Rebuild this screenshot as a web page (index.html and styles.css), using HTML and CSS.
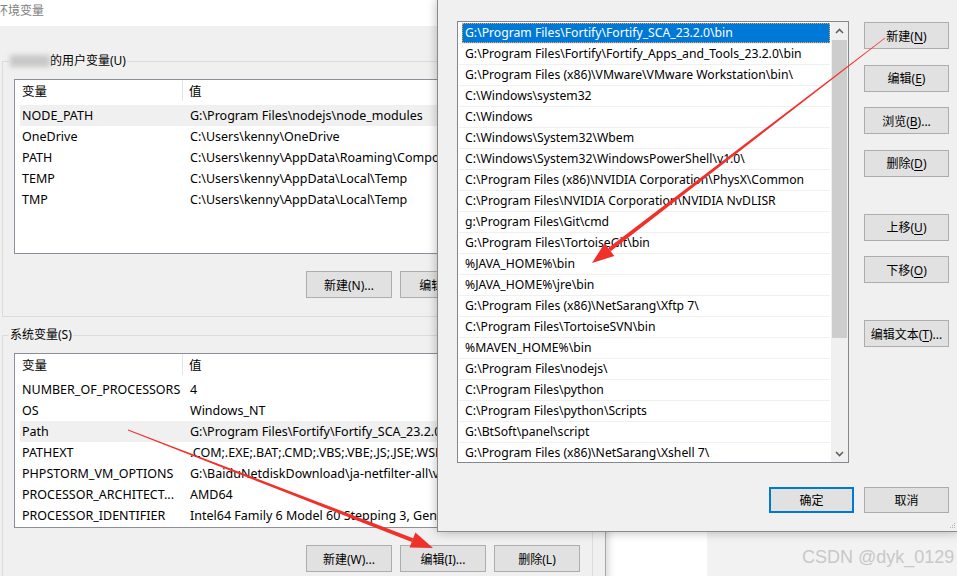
FILE: index.html
```html
<!DOCTYPE html>
<html lang="zh-CN">
<head>
    <meta charset="UTF-8">
    <meta name="viewport" content="width=device-width, initial-scale=1.0">
    <title>编辑环境变量</title>
    <link rel="stylesheet" href="styles.css">
</head>
<body>
    <div class="desk">
        <div class="backWin"></div>

        <!-- 环境变量 window (behind) -->
        <div class="envWin">
            <div class="titleBar">环境变量</div>
            <div class="winBody">
                <fieldset class="group">
                    <legend><span class="blur"></span>的用户变量(U)</legend>
                    <div class="varList">
                        <div class="vHead"><div class="c1">变量</div><div class="c2">值</div></div>
                        <div class="vRow hl"><div class="c1">NODE_PATH</div><div class="c2">G:\Program Files\nodejs\node_modules</div></div>
                        <div class="vRow"><div class="c1">OneDrive</div><div class="c2">C:\Users\kenny\OneDrive</div></div>
                        <div class="vRow"><div class="c1">PATH</div><div class="c2">C:\Users\kenny\AppData\Roaming\Composer\vendor\bin</div></div>
                        <div class="vRow"><div class="c1">TEMP</div><div class="c2">C:\Users\kenny\AppData\Local\Temp</div></div>
                        <div class="vRow"><div class="c1">TMP</div><div class="c2">C:\Users\kenny\AppData\Local\Temp</div></div>
                    </div>
                    <div class="btnRow">
                        <button class="btn">新建(N)...</button>
                        <button class="btn">编辑(E)...</button>
                        <button class="btn">删除(D)</button>
                    </div>
                </fieldset>

                <fieldset class="group sys">
                    <legend>系统变量(S)</legend>
                    <div class="varList">
                        <div class="vHead"><div class="c1">变量</div><div class="c2">值</div></div>
                        <div class="vRow"><div class="c1">NUMBER_OF_PROCESSORS</div><div class="c2">4</div></div>
                        <div class="vRow"><div class="c1">OS</div><div class="c2">Windows_NT</div></div>
                        <div class="vRow hl"><div class="c1">Path</div><div class="c2">G:\Program Files\Fortify\Fortify_SCA_23.2.0\bin;G:\Program Files\Fortify</div></div>
                        <div class="vRow"><div class="c1">PATHEXT</div><div class="c2">.COM;.EXE;.BAT;.CMD;.VBS;.VBE;.JS;.JSE;.WSF;.WSH;.MSC</div></div>
                        <div class="vRow"><div class="c1">PHPSTORM_VM_OPTIONS</div><div class="c2">G:\BaiduNetdiskDownload\ja-netfilter-all\vmoptions\phpstorm.vmoptions</div></div>
                        <div class="vRow"><div class="c1">PROCESSOR_ARCHITECT...</div><div class="c2">AMD64</div></div>
                        <div class="vRow"><div class="c1">PROCESSOR_IDENTIFIER</div><div class="c2">Intel64 Family 6 Model 60 Stepping 3, GenuineIntel</div></div>
                    </div>
                    <div class="btnRow">
                        <button class="btn">新建(W)...</button>
                        <button class="btn">编辑(I)...</button>
                        <button class="btn">删除(L)</button>
                    </div>
                </fieldset>
            </div>
        </div>

        <!-- 编辑环境变量 dialog -->
        <div class="editDlg">
            <div class="pathList">
                <div class="rows">
                    <div class="pRow sel"><div class="txt">G:\Program Files\Fortify\Fortify_SCA_23.2.0\bin</div></div>
                    <div class="pRow"><div class="txt">G:\Program Files\Fortify\Fortify_Apps_and_Tools_23.2.0\bin</div></div>
                    <div class="pRow"><div class="txt">G:\Program Files (x86)\VMware\VMware Workstation\bin\</div></div>
                    <div class="pRow"><div class="txt">C:\Windows\system32</div></div>
                    <div class="pRow"><div class="txt">C:\Windows</div></div>
                    <div class="pRow"><div class="txt">C:\Windows\System32\Wbem</div></div>
                    <div class="pRow"><div class="txt">C:\Windows\System32\WindowsPowerShell\v1.0\</div></div>
                    <div class="pRow"><div class="txt">C:\Program Files (x86)\NVIDIA Corporation\PhysX\Common</div></div>
                    <div class="pRow"><div class="txt">C:\Program Files\NVIDIA Corporation\NVIDIA NvDLISR</div></div>
                    <div class="pRow"><div class="txt">g:\Program Files\Git\cmd</div></div>
                    <div class="pRow"><div class="txt">G:\Program Files\TortoiseGit\bin</div></div>
                    <div class="pRow"><div class="txt">%JAVA_HOME%\bin</div></div>
                    <div class="pRow"><div class="txt">%JAVA_HOME%\jre\bin</div></div>
                    <div class="pRow"><div class="txt">G:\Program Files (x86)\NetSarang\Xftp 7\</div></div>
                    <div class="pRow"><div class="txt">C:\Program Files\TortoiseSVN\bin</div></div>
                    <div class="pRow"><div class="txt">%MAVEN_HOME%\bin</div></div>
                    <div class="pRow"><div class="txt">G:\Program Files\nodejs\</div></div>
                    <div class="pRow"><div class="txt">C:\Program Files\python</div></div>
                    <div class="pRow"><div class="txt">C:\Program Files\python\Scripts</div></div>
                    <div class="pRow"><div class="txt">G:\BtSoft\panel\script</div></div>
                    <div class="pRow"><div class="txt">G:\Program Files (x86)\NetSarang\Xshell 7\</div></div>
                </div>
                <div class="sBar">
                    <div class="sBtn">
                        <svg width="9" height="6" viewBox="0 0 9 6"><path d="M1 5 L4.5 1.5 L8 5" fill="none" stroke="#606060" stroke-width="1.6"/></svg>
                    </div>
                    <div class="sThumb"></div>
                    <div class="sTrack"></div>
                    <div class="sBtn">
                        <svg width="9" height="6" viewBox="0 0 9 6"><path d="M1 1 L4.5 4.5 L8 1" fill="none" stroke="#606060" stroke-width="1.6"/></svg>
                    </div>
                </div>
            </div>

            <div class="sideBtns">
                <button class="btn">新建(<u>N</u>)</button>
                <button class="btn">编辑(<u>E</u>)</button>
                <button class="btn">浏览(<u>B</u>)...</button>
                <button class="btn">删除(<u>D</u>)</button>
                <button class="btn far">上移(<u>U</u>)</button>
                <button class="btn">下移(<u>O</u>)</button>
                <button class="btn far">编辑文本(<u>T</u>)...</button>
            </div>

            <div class="okRow">
                <button class="btn def">确定</button>
                <button class="btn">取消</button>
            </div>

            <svg class="grip" width="6" height="6" viewBox="0 0 6 6">
                <rect x="4" y="0" width="1" height="1" fill="#b0b0b0"/>
                <rect x="2" y="2" width="1" height="1" fill="#b0b0b0"/>
                <rect x="4" y="2" width="1" height="1" fill="#b0b0b0"/>
                <rect x="0" y="4" width="1" height="1" fill="#b0b0b0"/>
                <rect x="2" y="4" width="1" height="1" fill="#b0b0b0"/>
                <rect x="4" y="4" width="1" height="1" fill="#b0b0b0"/>
            </svg>
        </div>

        <!-- red annotation arrows -->
        <svg class="marks" width="957" height="576" viewBox="0 0 957 576">
            <polygon fill="#f0302a" points="128.1,429.6 127.9,430.4 411.8,542 413.2,538.2"/>
            <polygon fill="#f0302a" points="409.6,547.6 415.4,532.6 433,548"/>
            <polygon fill="#f0302a" points="884.8,37.7 885.2,38.3 610.7,251.2 608.2,248"/>
            <polygon fill="#f0302a" points="604.6,243.3 614.3,255.9 592,263"/>
        </svg>

        <div class="watermark">CSDN @dyk_0129</div>
    </div>
</body>
</html>
```

FILE: styles.css
```css
*{
    margin: 0;
    padding: 0;
    box-sizing: border-box;
}
body{
    width: 957px;
    height: 576px;
    overflow: hidden;
    background: #f2f2f2;
    font-family: "Noto Sans", "Noto Sans CJK SC", sans-serif;
    font-size: 12px;
    color: #000;
}
.desk{
    position: relative;
    width: 957px;
    height: 576px;
    overflow: hidden;
}
.backWin{
    position: absolute;
    left: 606px;
    top: 400px;
    width: 101px;
    height: 200px;
    background: #fff;
}

/* left window */
.envWin{
    position: absolute;
    left: 0;
    top: 0;
    width: 606px;
    height: 600px;
    background: #f0f0f0;
    border-right: 1px solid #a8a8a8;
    box-shadow: 2px 0 8px rgba(0, 0, 0, 0.18);
}
.titleBar{
    height: 26px;
    background: #fff;
    color: #808080;
    line-height: 22px;
    text-indent: -4px;
    white-space: nowrap;
}
.winBody{
    padding: 27px 12px 0 2px;
}
.group{
    border: 1px solid #dcdcdc;
    padding: 0 12px 18px 11px;
    min-width: 0;
}
.group.sys{
    margin-top: 10px;
}
.group legend{
    line-height: 16px;
    padding: 0 1px;
    margin-left: -5px;
    white-space: nowrap;
}
.blur{
    display: inline-block;
    width: 40px;
    height: 12px;
    vertical-align: -2px;
    background: #c8c8c8;
    filter: blur(2.5px);
}
.varList{
    margin-top: 10px;
    height: 175px;
    background: #fff;
    border: 1px solid #8a8f98;
    padding-left: 5px;
    overflow: hidden;
    font-size: 12.5px;
}
.vHead{
    display: flex;
    height: 25px;
}
.vHead .c1{
    width: 163px;
    height: 21px;
    line-height: 24px;
    padding-left: 2px;
    border-right: 1px solid #e5e5e5;
}
.vHead .c2{
    line-height: 24px;
    padding-left: 6px;
}
.vRow{
    display: flex;
    height: 21px;
    line-height: 21px;
    white-space: nowrap;
}
.vRow.hl{
    background: #f0f0f0;
}
.vRow .c1{
    width: 168px;
    flex: none;
    padding-left: 2px;
    overflow: hidden;
}
.vRow .c2{
    padding-left: 2px;
}
.btnRow{
    margin-top: 17px;
    display: flex;
    justify-content: flex-end;
    gap: 8px;
}
.btn{
    font: inherit;
    color: #000;
    background: #e1e1e1;
    border: 1px solid #adadad;
    height: 27px;
    width: 86px;
    white-space: nowrap;
}
.btn u{
    text-underline-offset: 2px;
}

/* edit dialog */
.editDlg{
    position: absolute;
    left: 437px;
    top: -1px;
    width: 522px;
    height: 533px;
    background: #f0f0f0;
    border: 1px solid #8a8a8a;
    box-shadow: 0 0 10px rgba(0, 0, 0, 0.28);
    padding: 21px 9px 0 19px;
    display: grid;
    grid-template-columns: 392px 85px;
    grid-template-rows: 442px 26px;
    column-gap: 15px;
    row-gap: 24px;
}
.pathList{
    display: flex;
    background: #fff;
    border: 1px solid #828790;
    overflow: hidden;
    font-size: 12.2px;
}
.rows{
    flex: 1;
    padding: 1px 1px 0 1px;
    overflow: hidden;
}
.pRow{
    height: 21px;
    padding-left: 3px;
    border-bottom: 1px solid #f0f0f0;
    white-space: nowrap;
}
.pRow .txt{
    height: 20px;
    line-height: 20px;
    padding-left: 3px;
}
.pRow.sel .txt{
    background: #0078d7;
    color: #fff;
    outline: 1px dotted #f4a64a;
    outline-offset: -1px;
}
.sBar{
    width: 17px;
    flex: none;
    display: flex;
    flex-direction: column;
    background: #f0f0f0;
}
.sBtn{
    height: 17px;
    display: flex;
    align-items: center;
    justify-content: center;
}
.sThumb{
    margin: 1px 1px 0 1px;
    height: 298px;
    background: #cdcdcd;
}
.sTrack{
    flex: 1;
}
.sideBtns{
    display: flex;
    flex-direction: column;
    gap: 15.5px;
    padding-top: 1px;
}
.sideBtns .btn{
    width: 85px;
}
.sideBtns .far{
    margin-top: 21.5px;
}
.okRow{
    grid-column: 1 / 3;
    display: flex;
    justify-content: flex-end;
    gap: 10px;
}
.okRow .btn{
    width: 85px;
    height: 26px;
}
.okRow .def{
    border: 2px solid #0078d7;
}
.grip{
    position: absolute;
    right: 2px;
    bottom: 2px;
}

/* overlays */
.marks{
    position: absolute;
    left: 0;
    top: 0;
    pointer-events: none;
}
.watermark{
    position: absolute;
    left: 802px;
    top: 547px;
    font-family: "Liberation Sans", sans-serif;
    font-size: 18px;
    line-height: 20px;
    color: #c8c8c8;
    white-space: nowrap;
}
```
